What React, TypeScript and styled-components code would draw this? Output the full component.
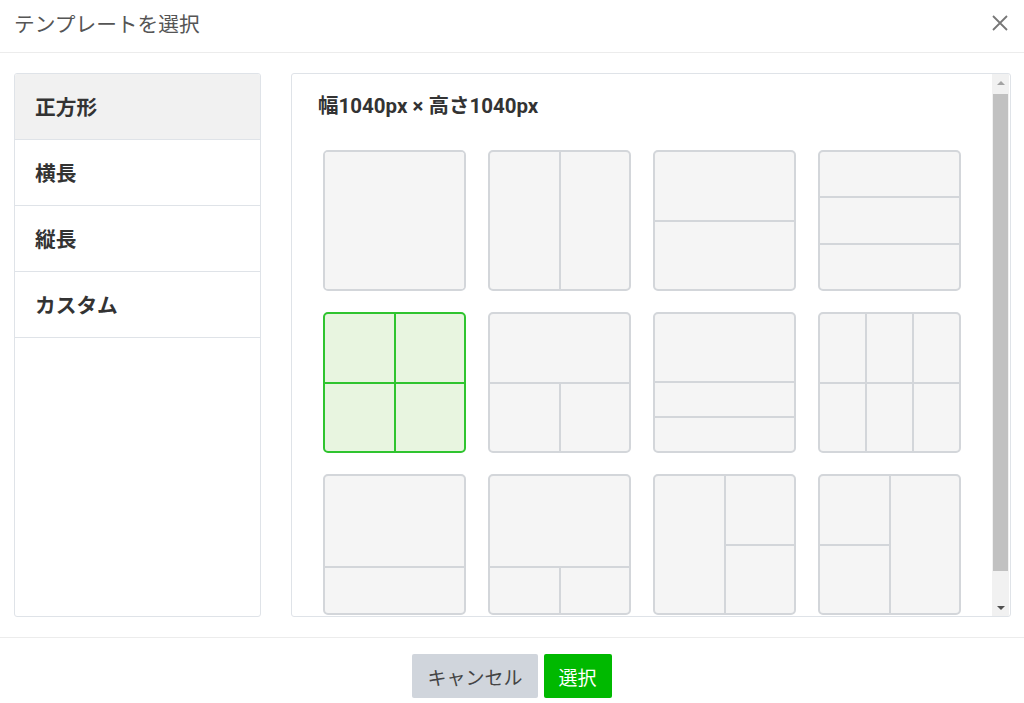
import React from 'react'
import styled, { createGlobalStyle, css } from 'styled-components'

const GlobalStyle = createGlobalStyle`
  html, body {
    margin: 0;
    padding: 0;
    background: #fff;
  }
  body {
    font-family: Roboto, "Noto Sans CJK JP", sans-serif;
    color: #333;
  }
  * {
    box-sizing: border-box;
  }
`

type Template = {
  areas: string[]
  rows?: string
}

const templates: Template[] = [
  { areas: ['a'] },
  { areas: ['a b'] },
  { areas: ['a', 'b'] },
  { areas: ['a', 'b', 'c'] },
  { areas: ['a b', 'c d'] },
  { areas: ['a a', 'b c'] },
  { areas: ['a', 'b', 'c'], rows: '2fr 1fr 1fr' },
  { areas: ['a b c', 'd e f'] },
  { areas: ['a', 'b'], rows: '2fr 1fr' },
  { areas: ['a a', 'b c'], rows: '2fr 1fr' },
  { areas: ['a b', 'a c'] },
  { areas: ['a c', 'b c'] },
]

const categories = ['正方形', '横長', '縦長', 'カスタム']

const Dialog = styled.div`
  display: flex;
  flex-direction: column;
  width: 1024px;
  height: 703px;
`

const Header = styled.header`
  display: flex;
  align-items: center;
  justify-content: space-between;
  height: 53px;
  padding: 0 14px 7px 14px;
  border-bottom: 1px solid #ececec;
`

const Title = styled.h1`
  margin: 0;
  font-size: 20.7px;
  font-weight: 400;
  color: #555;
`

const CloseButton = styled.button`
  display: flex;
  align-items: center;
  justify-content: center;
  width: 24px;
  height: 24px;
  margin-right: -2px;
  padding: 0;
  border: none;
  background: none;
  color: #777;
`

const Body = styled.main`
  flex: 1;
  display: flex;
  gap: 30px;
  padding: 20px 13px 20px 14px;
  min-height: 0;
`

const Sidebar = styled.nav`
  width: 247px;
  border: 1px solid #dfe3e8;
  border-radius: 3px;
  overflow: hidden;
`

const SideItem = styled.div<{ $active?: boolean }>`
  display: flex;
  align-items: center;
  height: 66px;
  padding: 0 0 2px 20px;
  border-bottom: 1px solid #dfe3e8;
  font-size: 20.7px;
  font-weight: 700;
  color: #333;
  background: ${p => (p.$active ? '#f1f1f1' : '#fff')};
`

const Panel = styled.section`
  flex: 1;
  display: flex;
  border: 1px solid #dfe3e8;
  border-radius: 3px;
  overflow: hidden;
`

const Content = styled.div`
  flex: 1;
  overflow: hidden;
  padding: 18px 0 0 26px;
`

const SizeLabel = styled.h2`
  margin: 0;
  font-size: 20.5px;
  line-height: 28px;
  font-weight: 700;
  color: #333;
`

const TileGrid = styled.div`
  display: grid;
  grid-template-columns: repeat(4, 143px);
  grid-auto-rows: 141px;
  column-gap: 22px;
  row-gap: 21px;
  margin-top: 30px;
  padding-left: 5px;
`

const Tile = styled.div<{ $areas: string; $rows?: string; $selected?: boolean }>`
  display: grid;
  grid-template-areas: ${p => p.$areas};
  grid-auto-columns: 1fr;
  grid-template-rows: ${p => p.$rows ?? 'none'};
  grid-auto-rows: 1fr;
  gap: 2px;
  border: 2px solid #d3d6da;
  border-radius: 5px;
  background: #d3d6da;
  overflow: hidden;
  ${p =>
    p.$selected &&
    css`
      border-color: #2fc42f;
      background: #2fc42f;
    `}
`

const Cell = styled.div<{ $area: string; $selected?: boolean }>`
  grid-area: ${p => p.$area};
  background: ${p => (p.$selected ? '#e8f5e0' : '#f5f5f5')};
`

const ScrollBar = styled.div`
  display: flex;
  flex-direction: column;
  width: 17px;
  margin-right: 1px;
  background: #f1f1f1;
`

const ScrollArrow = styled.div<{ $down?: boolean }>`
  display: flex;
  align-items: center;
  justify-content: center;
  height: 17px;
  &::after {
    content: '';
    width: 0;
    height: 0;
    border-left: 4px solid transparent;
    border-right: 4px solid transparent;
    ${p =>
      p.$down
        ? css`
            border-top: 4px solid #505050;
          `
        : css`
            border-bottom: 4px solid #a3a3a3;
          `}
  }
`

const ScrollTrack = styled.div`
  flex: 1;
  padding: 3px 1px 28px 1px;
`

const ScrollThumb = styled.div`
  height: 100%;
  background: #c1c1c1;
`

const Footer = styled.footer`
  display: flex;
  justify-content: center;
  gap: 6px;
  height: 66px;
  padding-top: 16px;
  border-top: 1px solid #ececec;
`

const Button = styled.button<{ $primary?: boolean }>`
  height: 44px;
  padding: 0 15px;
  border: none;
  border-radius: 2px;
  font-family: Roboto, "Noto Sans CJK JP", sans-serif;
  font-size: 19px;
  color: ${p => (p.$primary ? '#fff' : '#444')};
  background: ${p => (p.$primary ? '#00b900' : '#d0d5dc')};
`

const TemplateTile: React.FC<{ template: Template; selected?: boolean }> = ({ template, selected }) => {
  const letters = Array.from(new Set(template.areas.join(' ').split(' ')))
  const areas = template.areas.map(a => `"${a}"`).join(' ')
  return (
    <Tile $areas={areas} $rows={template.rows} $selected={selected}>
      {letters.map(l => (
        <Cell key={l} $area={l} $selected={selected} />
      ))}
    </Tile>
  )
}

const CloseIcon = () => (
  <svg width="18" height="18" viewBox="0 0 18 18" fill="none" stroke="currentColor" strokeWidth="1.8">
    <path d="M2 2 L16 16 M16 2 L2 16" />
  </svg>
)

const App: React.FC = () => (
  <>
    <GlobalStyle />
    <Dialog>
      <Header>
        <Title>テンプレートを選択</Title>
        <CloseButton aria-label="close">
          <CloseIcon />
        </CloseButton>
      </Header>
      <Body>
        <Sidebar>
          {categories.map((c, i) => (
            <SideItem key={c} $active={i === 0}>
              {c}
            </SideItem>
          ))}
        </Sidebar>
        <Panel>
          <Content>
            <SizeLabel>幅1040px × 高さ1040px</SizeLabel>
            <TileGrid>
              {templates.map((t, i) => (
                <TemplateTile key={i} template={t} selected={i === 4} />
              ))}
            </TileGrid>
          </Content>
          <ScrollBar>
            <ScrollArrow />
            <ScrollTrack>
              <ScrollThumb />
            </ScrollTrack>
            <ScrollArrow $down />
          </ScrollBar>
        </Panel>
      </Body>
      <Footer>
        <Button>キャンセル</Button>
        <Button $primary>選択</Button>
      </Footer>
    </Dialog>
  </>
)

export default App
